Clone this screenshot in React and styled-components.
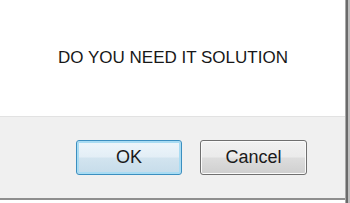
import React from "react";
import styled, { createGlobalStyle } from "styled-components";

const Global = createGlobalStyle`
  html, body { margin: 0; padding: 0; background: #ffffff; }
  body { width: 350px; height: 203px; overflow: hidden; }
`;

const Frame = styled.div`
  width: 350px;
  height: 203px;
  display: flex;
  background: #ffffff;
`;

const Dialog = styled.div`
  width: 345px;
  height: 203px;
  display: flex;
  flex-direction: column;
  font-family: "Liberation Sans", Arial, sans-serif;
`;

const Edge = styled.div`
  width: 5px;
  height: 203px;
  background: linear-gradient(to right, #a8a8a8 0, #a8a8a8 1px, #6a6a6a 1px, #6a6a6a 3px, #bdbdbd 3px);
`;

const Body = styled.div`
  height: 117px;
  display: flex;
  align-items: center;
  justify-content: center;
  padding-bottom: 1px;
  box-sizing: border-box;
  background: #ffffff;
  border-bottom: 1px solid #e2e2e2;
`;

const Message = styled.div`
  font-size: 17px;
  color: #181818;
  margin-left: 1px;
`;

const Footer = styled.div`
  height: 83px;
  background: #f0f0f0;
  display: flex;
  align-items: flex-start;
  justify-content: flex-end;
  gap: 18px;
  padding: 23px 38px 0 0;
  box-sizing: border-box;
  border-bottom: 2px solid #8e8e8e;
`;

const Button = styled.button`
  width: ${(p) => p.$w}px;
  height: 35px;
  box-sizing: border-box;
  border-radius: 3px;
  font-family: "Liberation Sans", Arial, sans-serif;
  font-size: 18px;
  color: #1a1a1a;
  padding: 0;
  display: flex;
  align-items: center;
  justify-content: center;
  border: 1px solid ${(p) => (p.$primary ? "#3b8fc0" : "#707070")};
  background: ${(p) =>
    p.$primary
      ? "linear-gradient(to bottom, #eef6fb 0%, #e3eef6 48%, #d2e4ef 52%, #c6dcea 100%)"
      : "linear-gradient(to bottom, #f2f2f2 0%, #ebebeb 48%, #dddddd 52%, #cfcfcf 100%)"};
  box-shadow: inset 0 0 0 ${(p) => (p.$primary ? "2px #a9dcf3" : "1px #fbfbfb")};
`;

export default function App() {
  return (
    <>
      <Global />
      <Frame>
        <Dialog>
          <Body>
            <Message>DO YOU NEED IT SOLUTION</Message>
          </Body>
          <Footer>
            <Button $primary $w={106}>OK</Button>
            <Button $w={107}>Cancel</Button>
          </Footer>
        </Dialog>
        <Edge />
      </Frame>
    </>
  );
}
